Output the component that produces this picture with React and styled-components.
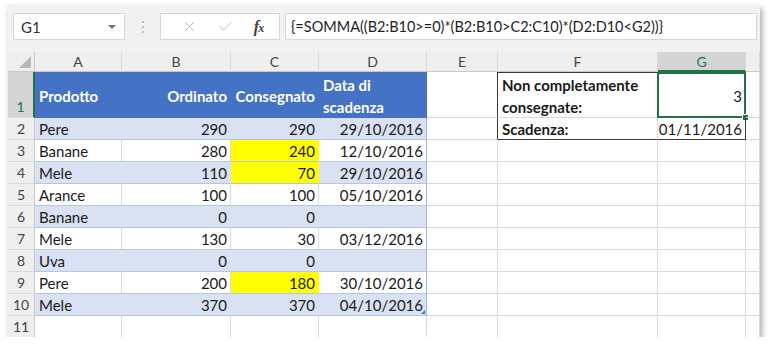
import React from "react";
import styled, { createGlobalStyle, css } from "styled-components";
import { X, Check } from "lucide-react";

const GlobalStyle = createGlobalStyle`
  body {
    margin: 0;
    background: #ffffff;
  }
`;

const Window = styled.div`
  margin: 5px 0 0 8px;
  width: 752px;
  height: 332px;
  background: #f1f1f1;
  box-shadow: 2px 3px 6px rgba(0, 0, 0, 0.35);
  overflow: hidden;
  display: flex;
  flex-direction: column;
  font-family: Lato, "Open Sans", sans-serif;
`;

const FormulaBar = styled.div`
  height: 47px;
  flex: none;
  display: flex;
  align-items: flex-start;
  padding: 8px 0 0 5px;
  box-sizing: border-box;
`;

const Field = styled.div`
  height: 27px;
  box-sizing: border-box;
  background: #ffffff;
  border: 1px solid #d6d6d6;
  display: flex;
  align-items: center;
`;

const NameBox = styled(Field)`
  width: 112px;
  padding: 0 8px 0 7px;
  justify-content: space-between;
  font-size: 15px;
  color: #333;
`;

const Caret = styled.span`
  width: 0;
  height: 0;
  border-left: 4px solid transparent;
  border-right: 4px solid transparent;
  border-top: 4px solid #707070;
`;

const Dots = styled.div`
  width: 35px;
  height: 27px;
  display: flex;
  flex-direction: column;
  align-items: center;
  justify-content: center;
  gap: 3px;
  span {
    width: 2px;
    height: 2px;
    border-radius: 1px;
    background: #a8a8a8;
  }
`;

const ButtonBox = styled(Field)`
  width: 120px;
  justify-content: space-around;
  padding: 0 6px 0 10px;
  color: #b4b4b4;
`;

const Fx = styled.span`
  font-family: "Liberation Serif", serif;
  font-style: italic;
  font-weight: 700;
  font-size: 16px;
  color: #404040;
  letter-spacing: -1px;
  sub {
    font-size: 12px;
    vertical-align: baseline;
  }
`;

const FormulaInput = styled(Field)`
  margin-left: 5px;
  width: 472px;
  padding-left: 5px;
  font-size: 14.5px;
  color: #1e1e1e;
  white-space: nowrap;
`;

const Sheet = styled.div`
  display: grid;
  grid-template-columns: 27px 87px 109px 88px 108px 71px 160px 88px 1fr;
  grid-template-rows: 20px 46px repeat(10, 22px);
  background: #ffffff;
  font-size: 15px;
  color: #1a1a1a;
`;

const Corner = styled.div`
  background: #efefef;
  border-right: 1px solid #c8c8c8;
  border-bottom: 1px solid #c8c8c8;
  position: relative;
  &::after {
    content: "";
    position: absolute;
    right: 3px;
    bottom: 3px;
    width: 0;
    height: 0;
    border-left: 12px solid transparent;
    border-bottom: 12px solid #b8b8b8;
  }
`;

const ColHead = styled.div`
  background: #efefef;
  border-right: 1px solid #d8d8d8;
  border-bottom: 1px solid #c8c8c8;
  display: flex;
  align-items: center;
  justify-content: center;
  font-size: 14px;
  color: #444;
  ${(p) =>
    p.$active &&
    css`
      background: #d4d4d4;
      color: #217346;
      border-bottom: 2px solid #217346;
    `}
`;

const RowHead = styled.div`
  background: #efefef;
  border-right: 1px solid #c8c8c8;
  border-bottom: 1px solid #d8d8d8;
  display: flex;
  align-items: center;
  justify-content: center;
  font-size: 14px;
  color: #444;
  ${(p) =>
    p.$tall &&
    css`
      align-items: flex-end;
      padding-bottom: 2px;
    `}
  ${(p) =>
    p.$active &&
    css`
      background: #d4d4d4;
      color: #217346;
      border-right: 2px solid #217346;
    `}
`;

const Cell = styled.div`
  box-sizing: border-box;
  position: relative;
  border-right: 1px solid #dadada;
  border-bottom: 1px solid #dadada;
  padding: 0 3px 0 4px;
  display: flex;
  align-items: center;
  justify-content: ${(p) => (p.$right ? "flex-end" : "flex-start")};
  white-space: nowrap;
  font-weight: ${(p) => (p.$bold ? 700 : 400)};
  ${(p) =>
    p.$tall &&
    css`
      white-space: normal;
      line-height: 22px;
      padding-top: 3px;
    `}
  ${(p) =>
    p.$table &&
    css`
      border-bottom-color: #b4c6e7;
    `}
  ${(p) =>
    p.$band &&
    css`
      background: #d9e1f2;
      border-right-color: #d9e1f2;
    `}
  ${(p) =>
    p.$yellow &&
    css`
      background: #ffff00;
      border-right-color: #ffff00;
    `}
  ${(p) =>
    p.$head &&
    css`
      background: #4472c4;
      border-right-color: #4472c4;
      border-bottom-color: #4472c4;
      color: #ffffff;
    `}
  ${(p) =>
    p.$edge &&
    css`
      border-right-color: #9bb3e0;
    `}
  ${(p) =>
    p.$boxRight &&
    css`
      border-right-color: #3a3a3a;
    `}
  ${(p) =>
    p.$boxBottom &&
    css`
      border-bottom-color: #3a3a3a;
    `}
  ${(p) =>
    p.$boxTop &&
    css`
      box-shadow: inset 0 1px 0 #3a3a3a;
    `}
`;

const Selection = styled.div`
  position: absolute;
  left: -1px;
  top: 0;
  right: -1px;
  bottom: -1px;
  border: 2px solid #217346;
  pointer-events: none;
  &::after {
    content: "";
    position: absolute;
    right: -5px;
    bottom: -5px;
    width: 5px;
    height: 5px;
    background: #217346;
    border: 1px solid #ffffff;
  }
`;

const ResizeMark = styled.span`
  position: absolute;
  right: 1px;
  bottom: 1px;
  width: 0;
  height: 0;
  border-left: 4px solid transparent;
  border-bottom: 4px solid #4472c4;
`;

const cols = ["A", "B", "C", "D", "E", "F", "G", ""];

const rows = [
  ["Pere", "290", "290", "29/10/2016"],
  ["Banane", "280", "240", "12/10/2016"],
  ["Mele", "110", "70", "29/10/2016"],
  ["Arance", "100", "100", "05/10/2016"],
  ["Banane", "0", "0", ""],
  ["Mele", "130", "30", "03/12/2016"],
  ["Uva", "0", "0", ""],
  ["Pere", "200", "180", "30/10/2016"],
  ["Mele", "370", "370", "04/10/2016"],
];

const yellowRows = [3, 4, 9];

const App = () => {
  return (
    <>
      <GlobalStyle />
      <Window>
        <FormulaBar>
          <NameBox>
            G1
            <Caret />
          </NameBox>
          <Dots>
            <span />
            <span />
            <span />
          </Dots>
          <ButtonBox>
            <X size={17} strokeWidth={1.3} />
            <Check size={17} strokeWidth={1.3} />
            <Fx>
              f<sub>x</sub>
            </Fx>
          </ButtonBox>
          <FormulaInput>{"{=SOMMA((B2:B10>=0)*(B2:B10>C2:C10)*(D2:D10<G2))}"}</FormulaInput>
        </FormulaBar>

        <Sheet>
          <Corner />
          {cols.map((c, i) => (
            <ColHead key={i} $active={c === "G"}>
              {c}
            </ColHead>
          ))}

          <RowHead $tall $active>
            1
          </RowHead>
          <Cell $head $bold $tall>Prodotto</Cell>
          <Cell $head $bold $tall $right>Ordinato</Cell>
          <Cell $head $bold $tall $right>Consegnato</Cell>
          <Cell $head $bold $tall>Data di scadenza</Cell>
          <Cell $boxRight />
          <Cell $bold $tall $boxTop>Non completamente consegnate:</Cell>
          <Cell $tall $right $boxTop $boxRight>
            3
            <Selection />
          </Cell>
          <Cell />

          {rows.map((r, i) => {
            const n = i + 2;
            const band = n % 2 === 0;
            return (
              <React.Fragment key={n}>
                <RowHead>{n}</RowHead>
                <Cell $table $band={band}>{r[0]}</Cell>
                <Cell $table $band={band} $right>{r[1]}</Cell>
                <Cell $table $band={band} $yellow={yellowRows.includes(n)} $right>
                  {r[2]}
                </Cell>
                <Cell $table $band={band} $edge $right>
                  {r[3]}
                  {n === 10 && <ResizeMark />}
                </Cell>
                <Cell $boxRight={n === 2} />
                {n === 2 ? (
                  <>
                    <Cell $bold $boxBottom>Scadenza:</Cell>
                    <Cell $right $boxBottom $boxRight>01/11/2016</Cell>
                  </>
                ) : (
                  <>
                    <Cell />
                    <Cell />
                  </>
                )}
                <Cell />
              </React.Fragment>
            );
          })}

          <RowHead>11</RowHead>
          {cols.map((_, i) => (
            <Cell key={i} />
          ))}
        </Sheet>
      </Window>
    </>
  );
};

export default App;
